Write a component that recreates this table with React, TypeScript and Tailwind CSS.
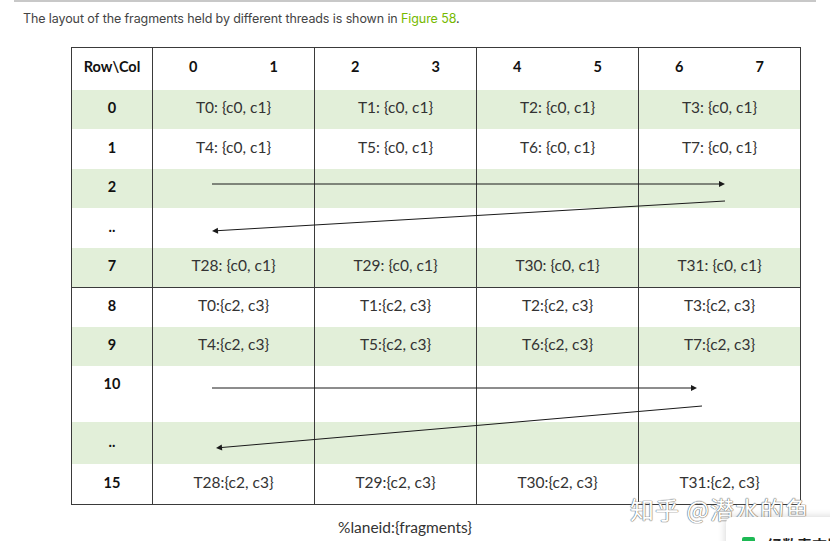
type Row = {
  label: string;
  cells: string[] | null;
  green: boolean;
  h: string;
  topLine?: boolean;
  labelTop?: boolean;
};

const rows: Row[] = [
  { label: "0", cells: ["T0: {c0, c1}", "T1: {c0, c1}", "T2: {c0, c1}", "T3: {c0, c1}"], green: true, h: "h-[39px]" },
  { label: "1", cells: ["T4: {c0, c1}", "T5: {c0, c1}", "T6: {c0, c1}", "T7: {c0, c1}"], green: false, h: "h-[40px]" },
  { label: "2", cells: null, green: true, h: "h-[39px]" },
  { label: "..", cells: null, green: false, h: "h-[40px]" },
  { label: "7", cells: ["T28: {c0, c1}", "T29: {c0, c1}", "T30: {c0, c1}", "T31: {c0, c1}"], green: true, h: "h-[39px]" },
  { label: "8", cells: ["T0:{c2, c3}", "T1:{c2, c3}", "T2:{c2, c3}", "T3:{c2, c3}"], green: false, h: "h-[40px]", topLine: true },
  { label: "9", cells: ["T4:{c2, c3}", "T5:{c2, c3}", "T6:{c2, c3}", "T7:{c2, c3}"], green: true, h: "h-[39px]" },
  { label: "10", cells: null, green: false, h: "h-[56px]", labelTop: true },
  { label: "..", cells: null, green: true, h: "h-[42px]" },
  { label: "15", cells: ["T28:{c2, c3}", "T29:{c2, c3}", "T30:{c2, c3}", "T31:{c2, c3}"], green: false, h: "h-[40px]" },
];

const headers = [
  ["0", "1"],
  ["2", "3"],
  ["4", "5"],
  ["6", "7"],
];

const Arrow = ({ x1, y1, x2, y2 }: { x1: number; y1: number; x2: number; y2: number }) => {
  const a = Math.atan2(y2 - y1, x2 - x1);
  const len = 6;
  const w = 3;
  const bx = x2 - len * Math.cos(a);
  const by = y2 - len * Math.sin(a);
  const p1 = `${bx + w * Math.sin(a)},${by - w * Math.cos(a)}`;
  const p2 = `${bx - w * Math.sin(a)},${by + w * Math.cos(a)}`;
  return (
    <g>
      <line x1={x1} y1={y1} x2={bx} y2={by} stroke="#1a1a1a" strokeWidth="1" />
      <polygon points={`${x2},${y2} ${p1} ${p2}`} fill="#1a1a1a" />
    </g>
  );
};

export default function App() {
  return (
    <div className="relative h-[541px] w-[830px] overflow-hidden bg-white font-['Lato',sans-serif] text-[#2b2b2b]">
      <div className="mx-[14px] h-[2px] bg-[#c8c8c8]" />
      <p className="ml-[23px] mt-[9px] text-[12.5px] leading-[16px] text-[#444] font-['Inter',sans-serif] tracking-[-0.1px]">
        The layout of the fragments held by different threads is shown in{" "}
        <span className="text-[#76b900]">Figure 58</span>.
      </p>

      <div className="relative ml-[71px] mt-[20px] w-[730px] border-l border-t border-b border-[#3a3a3a]">
        <div className="flex h-[42px] text-[14.5px]">
          <div className="flex w-[81px] items-center justify-center border-r border-[#3a3a3a] pb-[4px] font-bold text-[#111]">
            Row\Col
          </div>
          {headers.map((h, i) => (
            <div key={i} className="flex w-[162px] border-r border-[#3a3a3a] pb-[4px] font-bold text-[#111]">
              <div className="flex flex-1 items-center justify-center">{h[0]}</div>
              <div className="flex flex-1 items-center justify-center">{h[1]}</div>
            </div>
          ))}
        </div>
        {rows.map((r, i) => (
          <div
            key={i}
            className={`flex ${r.h} ${r.green ? "bg-[#e2efd9]" : "bg-white"} ${r.topLine ? "border-t border-[#3a3a3a]" : ""}`}
          >
            <div
              className={`flex w-[81px] justify-center border-r border-[#3a3a3a] text-[14.5px] font-bold text-[#111] ${r.labelTop ? "items-start pt-[7px]" : "items-center pb-[3px]"}`}
            >
              {r.label}
            </div>
            {[0, 1, 2, 3].map((c) => (
              <div key={c} className="flex w-[162px] items-center justify-center border-r border-[#3a3a3a] pb-[3px] text-[15.5px] text-[#333]">
                {r.cells ? r.cells[c] : ""}
              </div>
            ))}
          </div>
        ))}
        <svg className="pointer-events-none absolute left-[-1px] top-[-1px]" width="730" height="460">
          <Arrow x1={141} y1={137} x2={654} y2={137} />
          <Arrow x1={654} y1={154} x2={141} y2={184} />
          <Arrow x1={141} y1={341} x2={626} y2={341} />
          <Arrow x1={631} y1={359} x2={145} y2={401} />
        </svg>
      </div>

      <p className="mt-[13px] ml-[338px] text-[15.5px] leading-[18px] text-[#333]">%laneid:{"{fragments}"}</p>

      <div className="absolute left-[630px] top-[493px] text-[24px] leading-[32px] tracking-[1px] text-white font-['Noto_Sans_CJK_SC',sans-serif] [text-shadow:0_0_1px_#666,0_0_1px_#666,0_0_1px_#888]">
        知乎 @潜水的鱼
      </div>

      <div className="absolute left-[726px] top-[517px] h-[40px] w-[120px] rounded-tl-[6px] bg-white shadow-[0_0_8px_rgba(0,0,0,0.18)]">
        <div className="flex items-start gap-[12px] pl-[16px] pt-[20px]">
          <div className="h-[13px] w-[13px] rounded-[2px] bg-[#1db954]" />
          <span className="text-[15px] font-bold leading-[16px] text-[#222] font-['Noto_Sans_CJK_SC',sans-serif]">经数表末尾</span>
        </div>
      </div>
    </div>
  );
}
